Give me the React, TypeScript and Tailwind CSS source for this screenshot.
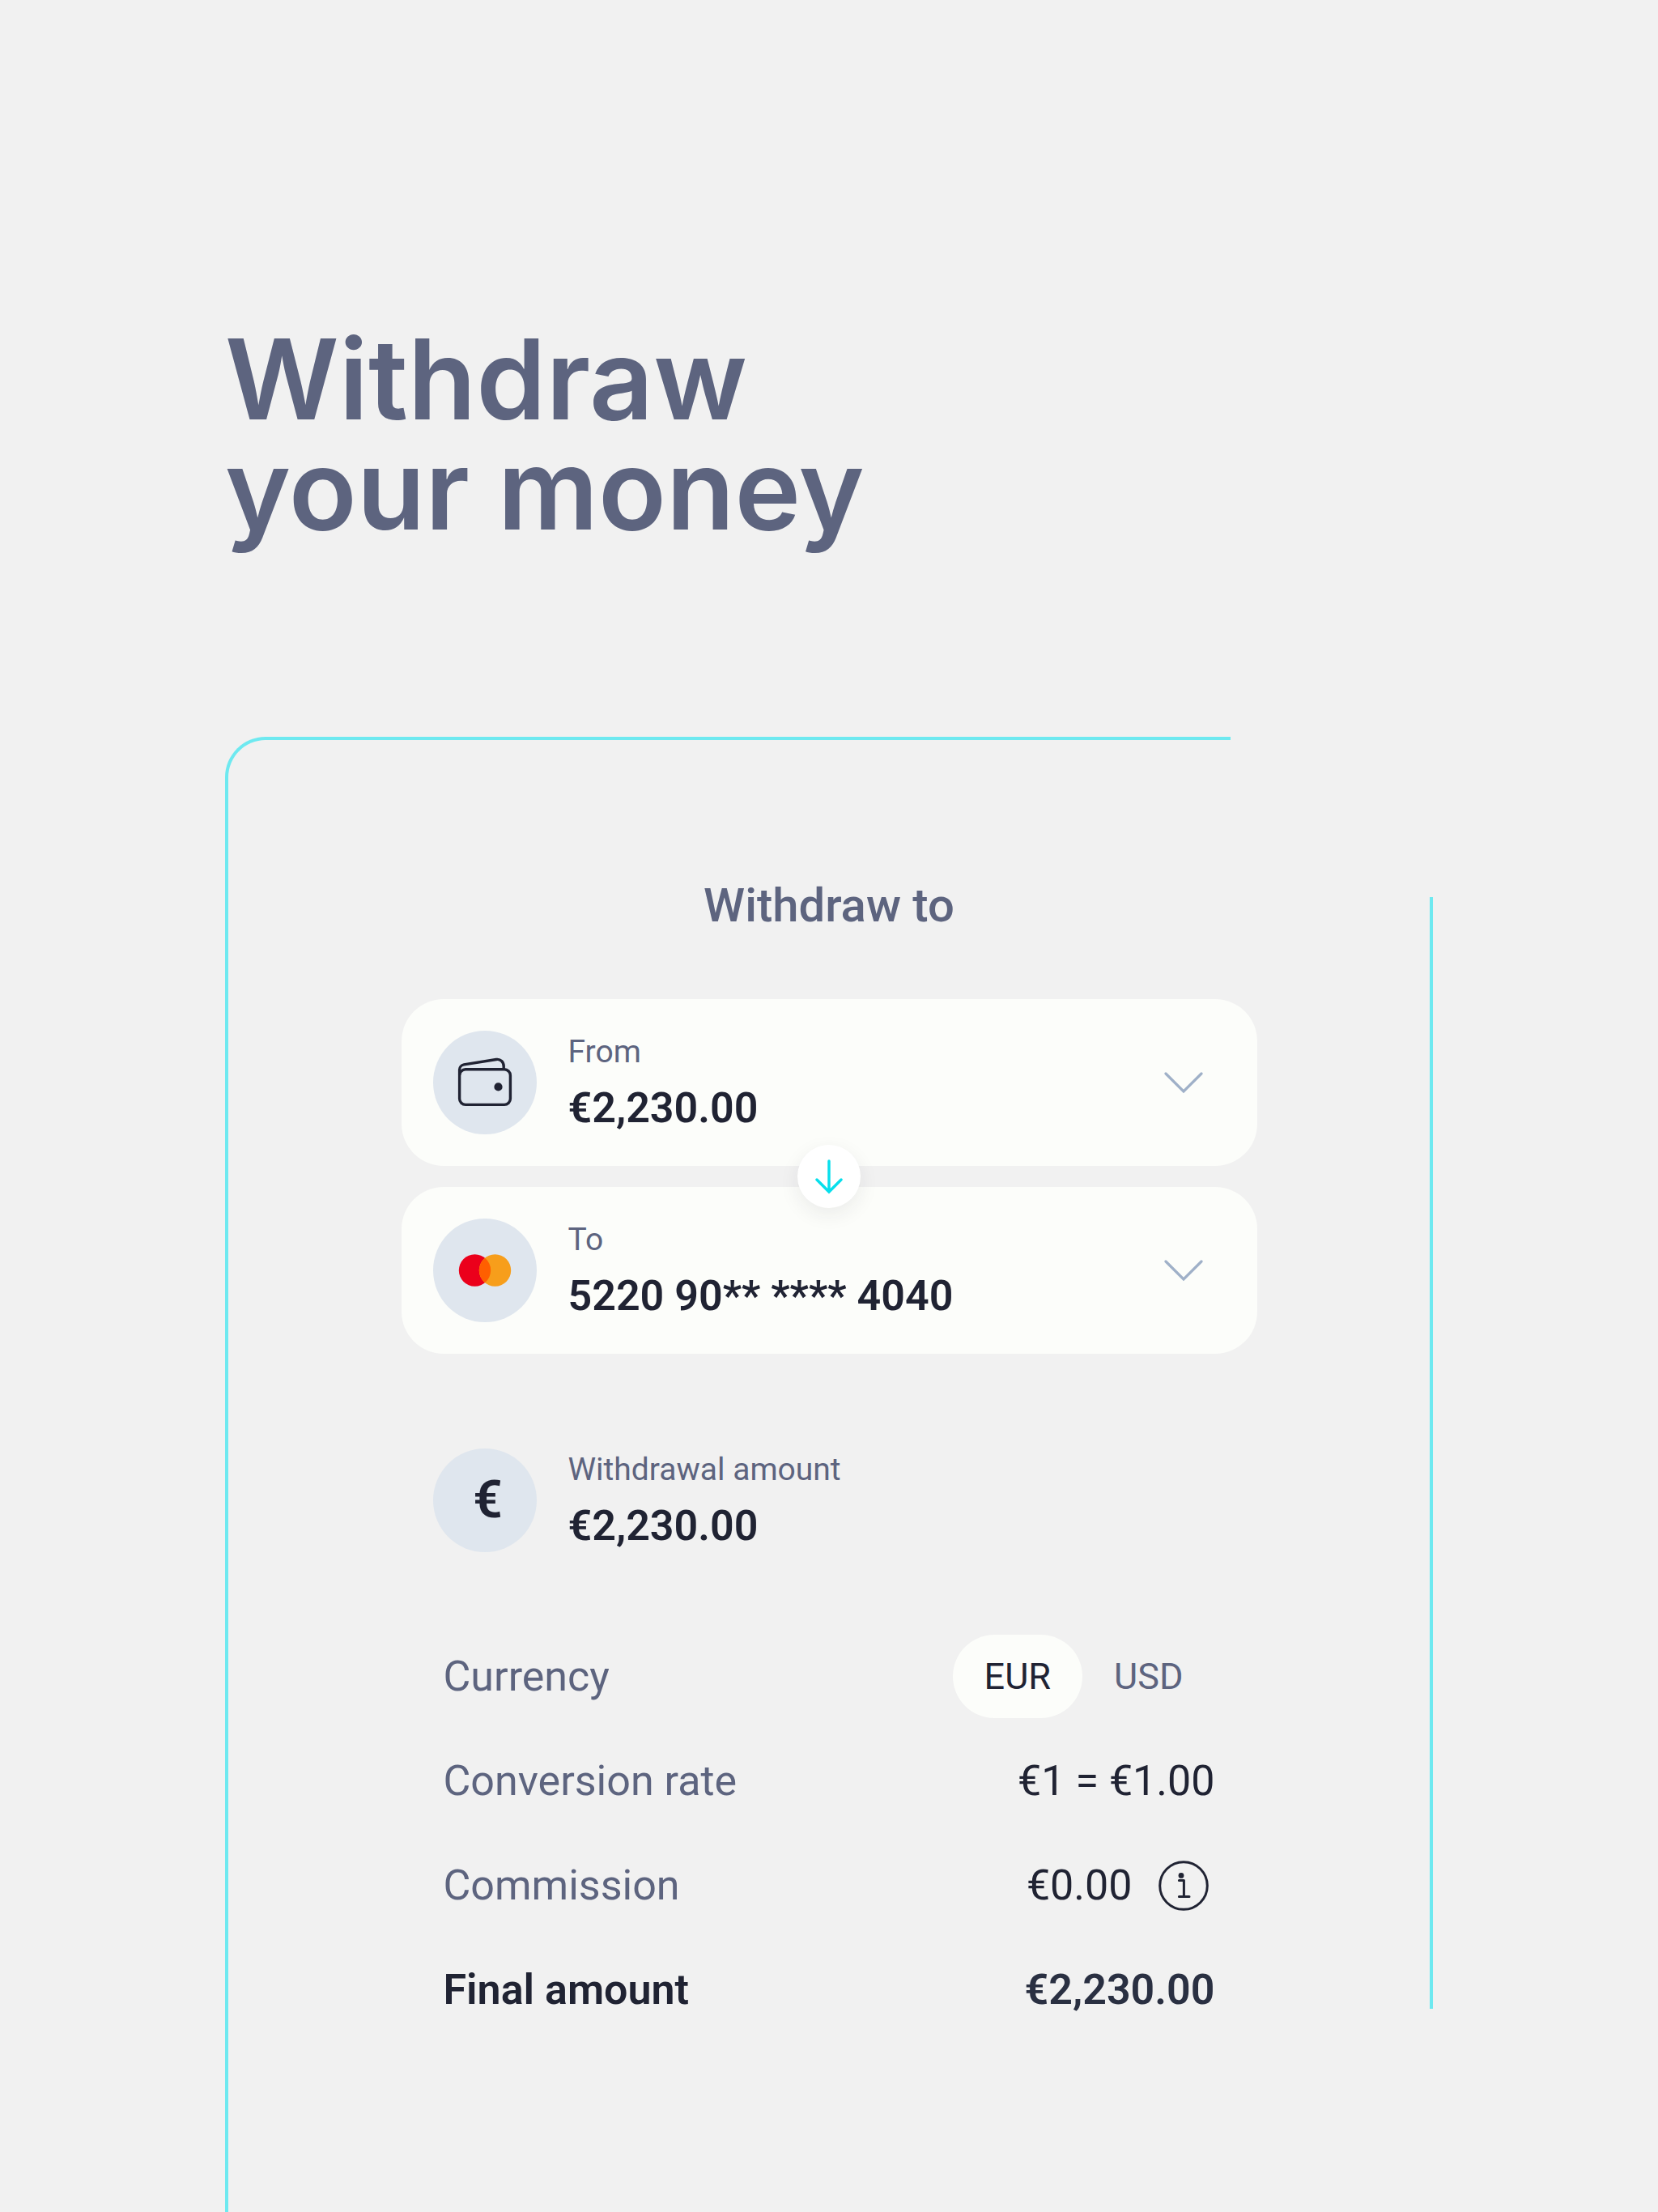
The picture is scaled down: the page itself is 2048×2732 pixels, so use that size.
import React, { useState } from 'react';

type Currency = 'EUR' | 'USD';

const CURRENCIES: Currency[] = ['EUR', 'USD'];

const WalletIcon: React.FC = () => (
  <svg className="h-[68px] w-[68px]" viewBox="0 0 68 68" fill="none" stroke="#202333" strokeWidth="3.4" aria-hidden="true">
    <rect x="2.6" y="17.8" width="62.8" height="43.6" rx="7.4" />
    <path d="M2.6 25V18C2.6 15 5 12.4 8 11.9L48 5.5C53.5 4.7 57.2 9 57.2 14V18" />
    <circle cx="50.5" cy="39.4" r="5.1" fill="#202333" stroke="none" />
  </svg>
);

const CardBrandIcon: React.FC = () => (
  <svg className="h-10 w-[66px]" viewBox="0 0 66 40" aria-hidden="true">
    <circle cx="20.5" cy="20" r="19.7" fill="#eb001b" />
    <circle cx="45.5" cy="20" r="19.7" fill="#f79e1b" />
    <path d="M33 4.8a19.7 19.7 0 0 1 0 30.4a19.7 19.7 0 0 1 0-30.4z" fill="#ff5f00" />
  </svg>
);

const ChevronIcon: React.FC = () => (
  <svg className="h-7 w-12" viewBox="0 0 48 28" fill="none" stroke="#9fb0c8" strokeWidth="3.2" strokeLinecap="round" aria-hidden="true">
    <path d="M2 3L24 25L46 3" />
  </svg>
);

const ArrowDownIcon: React.FC = () => (
  <svg className="h-11 w-9" viewBox="0 0 36 44" fill="none" stroke="#07dfec" strokeWidth="3.4" strokeLinecap="round" aria-hidden="true">
    <path d="M18 3V41M3 26L18 41L33 26" />
  </svg>
);

const InfoIcon: React.FC = () => (
  <svg className="h-[62px] w-[62px]" viewBox="0 0 62 62" fill="none" stroke="#202333" strokeWidth="3" strokeLinecap="round" aria-hidden="true">
    <circle cx="31" cy="31" r="29.3" />
    <path d="M25.4 24.6H31.4V44.4M25.4 44.4H38" strokeLinejoin="round" />
    <circle cx="28" cy="18.4" r="3.4" fill="#202333" stroke="none" />
  </svg>
);

interface FieldProps {
  icon: React.ReactNode;
  label: string;
  value: string;
}

const Field: React.FC<FieldProps> = ({ icon, label, value }) => (
  <span className="flex flex-1 items-center gap-[39px]">
    <span className="flex size-32 shrink-0 items-center justify-center rounded-full bg-[#dfe6ee]">{icon}</span>
    <span className="flex flex-col gap-[17px]">
      <span className="text-[39px] leading-[46px] text-[#5d647f]">{label}</span>
      <span className="text-[52px] leading-[60px] font-semibold text-[#202333]">{value}</span>
    </span>
  </span>
);

const AccountButton: React.FC<FieldProps> = (props) => (
  <button
    type="button"
    className="flex w-full items-center rounded-[52px] bg-[#fcfdfa] py-[39px] pr-[67px] pl-[39px] text-left"
  >
    <Field {...props} />
    <ChevronIcon />
  </button>
);

interface RowProps {
  label: string;
  labelClass?: string;
  children: React.ReactNode;
}

const Row: React.FC<RowProps> = ({ label, labelClass = 'text-[#5d647f]', children }) => (
  <div className="flex h-[129px] items-center justify-between">
    <dt className={labelClass}>{label}</dt>
    <dd className="flex items-center">{children}</dd>
  </div>
);

const App: React.FC = () => {
  const [currency, setCurrency] = useState<Currency>('EUR');

  return (
    <main className="flex min-h-screen flex-col bg-[#f1f1f1] px-[278px] pt-[400px] font-['Roboto',sans-serif]">
      <h1 className="font-['Inter',sans-serif] text-[138px] leading-[136px] font-semibold text-[#5d647f]">
        Withdraw
        <br />
        your money
      </h1>

      <div className="mt-[238px] grid flex-1">
        {/* open frame around the form */}
        <div className="col-start-1 row-start-1 mr-[250px] rounded-tl-[50px] border-t-4 border-l-4 border-[#6ee9f0]" />
        <div className="col-start-1 row-start-1 mt-[198px] mb-[251px] w-1 justify-self-end bg-[#6ee9f0]" />

        <section className="col-start-1 row-start-1 mx-auto w-full max-w-[1057px] pt-[174px]">
          <h2 className="text-center text-[58px] leading-[68px] font-medium text-[#5d647f]">Withdraw to</h2>

          <div className="relative mt-[82px] flex flex-col gap-[26px]">
            <AccountButton icon={<WalletIcon />} label="From" value="€2,230.00" />
            <AccountButton icon={<CardBrandIcon />} label="To" value="5220 90** **** 4040" />
            <span className="absolute top-1/2 left-1/2 flex size-[78px] -translate-x-1/2 -translate-y-1/2 items-center justify-center rounded-full bg-white shadow-[0_8px_24px_rgba(32,35,51,0.08)]">
              <ArrowDownIcon />
            </span>
          </div>

          <div className="mt-[117px] flex px-[39px]">
            <Field
              icon={<span className="pl-2 text-[64px] leading-none font-semibold text-[#202333]">€</span>}
              label="Withdrawal amount"
              value="€2,230.00"
            />
          </div>

          <dl className="mt-[89px] px-[52px] text-[52px] leading-[60px] text-[#202333]">
            <Row label="Currency">
              {CURRENCIES.map((c) => (
                <button
                  key={c}
                  type="button"
                  aria-pressed={c === currency}
                  onClick={() => setCurrency(c)}
                  className={`h-[103px] rounded-full px-[39px] text-[45px] ${
                    c === currency ? 'bg-[#fcfdfa] text-[#202333]' : 'text-[#5d647f]'
                  }`}
                >
                  {c}
                </button>
              ))}
            </Row>
            <Row label="Conversion rate">€1 = €1.00</Row>
            <Row label="Commission">
              €0.00
              <button type="button" aria-label="Commission details" className="mr-2 ml-8">
                <InfoIcon />
              </button>
            </Row>
            <Row label="Final amount" labelClass="font-semibold">
              <span className="font-semibold text-[#2a3042]">€2,230.00</span>
            </Row>
          </dl>
        </section>
      </div>
    </main>
  );
};

export default App;
